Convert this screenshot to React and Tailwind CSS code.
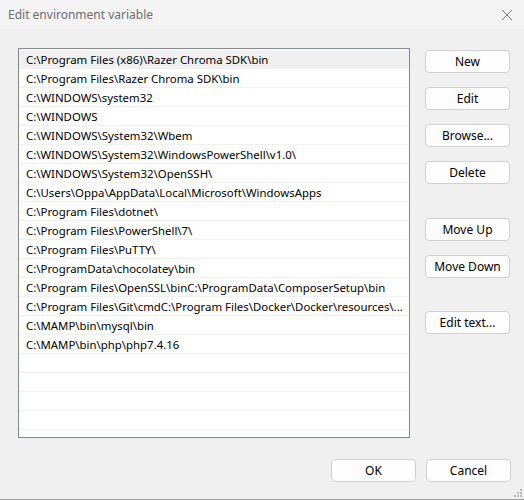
const paths = [
  "C:\\Program Files (x86)\\Razer Chroma SDK\\bin",
  "C:\\Program Files\\Razer Chroma SDK\\bin",
  "C:\\WINDOWS\\system32",
  "C:\\WINDOWS",
  "C:\\WINDOWS\\System32\\Wbem",
  "C:\\WINDOWS\\System32\\WindowsPowerShell\\v1.0\\",
  "C:\\WINDOWS\\System32\\OpenSSH\\",
  "C:\\Users\\Oppa\\AppData\\Local\\Microsoft\\WindowsApps",
  "C:\\Program Files\\dotnet\\",
  "C:\\Program Files\\PowerShell\\7\\",
  "C:\\Program Files\\PuTTY\\",
  "C:\\ProgramData\\chocolatey\\bin",
  "C:\\Program Files\\OpenSSL\\binC:\\ProgramData\\ComposerSetup\\bin",
  "C:\\Program Files\\Git\\cmdC:\\Program Files\\Docker\\Docker\\resources\\...",
  "C:\\MAMP\\bin\\mysql\\bin",
  "C:\\MAMP\\bin\\php\\php7.4.16",
  "",
  "",
  "",
  "",
];

function Button({ children, className = "" }) {
  return (
    <button
      className={`w-[85px] h-[23px] bg-[#fdfdfd] border border-[#d0d0d0] rounded-[4px] text-[12px] text-black leading-none ${className}`}
    >
      {children}
    </button>
  );
}

export default function App() {
  return (
    <div
      className="w-[524px] h-[500px] bg-[#f0f0f0] flex flex-col border-b border-[#a0a0a0] relative"
      style={{ fontFamily: '"Noto Sans", "Open Sans", sans-serif' }}
    >
      {/* title bar */}
      <div className="h-[29px] bg-[#f3f3f3] flex items-center justify-between pl-[8px] pr-[8px]">
        <span className="text-[12px] text-[#6e6e6e]">Edit environment variable</span>
        <svg width="12" height="12" viewBox="0 0 12 12" className="mr-[3px]">
          <path d="M1 1 L11 11 M11 1 L1 11" stroke="#777" strokeWidth="1" />
        </svg>
      </div>

      <div className="flex pl-[18px] pt-[19px]">
        {/* path list */}
        <div className="w-[392px] h-[390px] bg-white border border-[#828790] overflow-hidden pt-[1px]">
          {paths.map((p, i) => (
            <div
              key={i}
              className={`h-[19px] border-b border-[#f0f0f0] pl-[7px] text-[11.4px] leading-[19px] text-black whitespace-nowrap ${
                i === 0 ? "bg-[#f0f0f0]" : ""
              }`}
            >
              {p}
            </div>
          ))}
        </div>

        {/* action buttons */}
        <div className="flex flex-col ml-[15px] pt-[2px]">
          <Button>New</Button>
          <Button className="mt-[14px]">Edit</Button>
          <Button className="mt-[14px]">Browse...</Button>
          <Button className="mt-[14px]">Delete</Button>
          <Button className="mt-[34px]">Move Up</Button>
          <Button className="mt-[14px]">Move Down</Button>
          <Button className="mt-[33px]">Edit text...</Button>
        </div>
      </div>

      <div className="flex justify-end gap-[10px] pr-[13px] mt-[21px]">
        <Button>OK</Button>
        <Button>Cancel</Button>
      </div>

      {/* resize grip */}
      <div className="absolute right-[2px] bottom-[2px] grid grid-cols-3 gap-[1px]">
        {[0, 0, 1, 0, 1, 1, 1, 1, 1].map((on, i) => (
          <div key={i} className={`w-[2px] h-[2px] ${on ? "bg-[#b8b8b8]" : ""}`} />
        ))}
      </div>
    </div>
  );
}
